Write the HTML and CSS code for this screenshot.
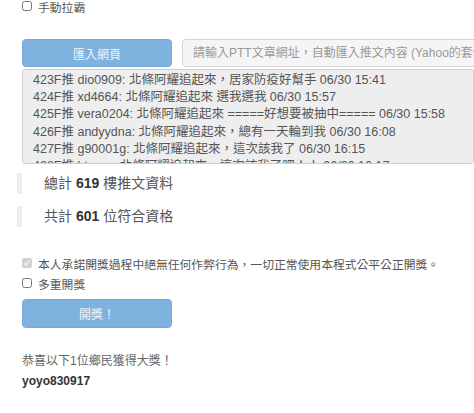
FILE: index.html
```html
<!DOCTYPE html>
<html lang="zh-Hant">
<head>
  <meta charset="UTF-8">
  <meta name="viewport" content="width=device-width, initial-scale=1.0">
  <title>PTT 抽獎</title>
  <link rel="stylesheet" href="styles.css">
</head>
<body>
  <div class="contenedor">
    <label class="opcion opcion-top">
      <input type="checkbox"> 手動拉霸
    </label>

    <div class="fila-importar">
      <button class="boton">匯入網頁</button>
      <input type="text" class="campo-url" placeholder="請輸入PTT文章網址，自動匯入推文內容 (Yahoo的套件">
    </div>

    <textarea class="lista-推文" readonly>423F推 dio0909: 北條阿耀追起來，居家防疫好幫手 06/30 15:41
424F推 xd4664: 北條阿耀追起來 選我選我 06/30 15:57
425F推 vera0204: 北條阿耀追起來 =====好想要被抽中===== 06/30 15:58
426F推 andyydna: 北條阿耀追起來，總有一天輪到我 06/30 16:08
427F推 g90001g: 北條阿耀追起來，這次該我了 06/30 16:15
428F推 btaoro: 北條阿耀追起來，這次該我了吧！！ 06/30 16:17</textarea>

    <blockquote class="resumen">總計 <b>619</b> 樓推文資料</blockquote>
    <blockquote class="resumen">共計 <b>601</b> 位符合資格</blockquote>

    <label class="opcion opcion-promesa">
      <input type="checkbox" checked disabled> 本人承諾開獎過程中絕無任何作弊行為，一切正常使用本程式公平公正開獎。
    </label>
    <label class="opcion">
      <input type="checkbox"> 多重開獎
    </label>
    <button class="boton boton-sorteo">開獎！</button>

    <p class="ganadores">恭喜以下1位鄉民獲得大獎！</p>
    <p class="ganador">yoyo830917</p>
  </div>
</body>
</html>
```

FILE: styles.css
```css
body {
  margin: 0;
  padding: 0;
  font-family: "Liberation Sans", "Noto Sans CJK TC", sans-serif;
  font-size: 12px;
  color: #555;
  background: #fff;
  overflow: hidden;
}

.contenedor {
  padding-left: 22px;
  width: 560px;
}

.opcion {
  display: flex;
  align-items: center;
  height: 20px;
  font-size: 11.8px;
  color: #555;
}

.opcion input {
  margin: 0 6px 0 0;
  width: 10px;
  height: 10px;
  accent-color: #bbb;
}

.opcion-top {
  margin-top: -4px;
}

.fila-importar {
  display: flex;
  gap: 10px;
  margin-top: 23px;
  height: 28px;
}

.boton {
  width: 150px;
  height: 28px;
  border: 1px solid #76a9d8;
  border-radius: 4px;
  background: #80b2df;
  color: #eef5fb;
  font-family: inherit;
  font-size: 12px;
  padding: 0;
}

.campo-url {
  flex: 1;
  box-sizing: border-box;
  height: 28px;
  border: 1px solid #d4d4d4;
  border-radius: 4px;
  background: #f5f5f5;
  padding: 0 10px;
  font-family: inherit;
  font-size: 12px;
}

.campo-url::placeholder {
  color: #9a9a9a;
}

.lista-推文 {
  display: block;
  box-sizing: border-box;
  width: 452px;
  height: 95px;
  margin: 2px 0 0;
  padding: 2px 10px;
  border: 1px solid #cfcfcf;
  border-radius: 3px;
  background: #eee;
  color: #555;
  font-family: inherit;
  font-size: 12.5px;
  line-height: 17.2px;
  resize: none;
  overflow: hidden;
  white-space: pre;
}

.resumen {
  margin: 9px 0 0 -5px;
  padding: 0 0 0 22px;
  border-left: 5px solid #eee;
  height: 21px;
  line-height: 21px;
  font-size: 14px;
  color: #555;
}

.resumen b {
  color: #333;
}

.resumen + .resumen {
  margin-top: 12px;
}

.opcion-promesa {
  margin-top: 26px;
}

.boton-sorteo {
  display: block;
  margin-top: 6px;
  height: 29px;
}

.ganadores {
  margin: 23px 0 0;
  line-height: 20px;
  color: #666;
}

.ganador {
  margin: 0;
  line-height: 20px;
  font-weight: bold;
  font-size: 12px;
  color: #333;
}
```
